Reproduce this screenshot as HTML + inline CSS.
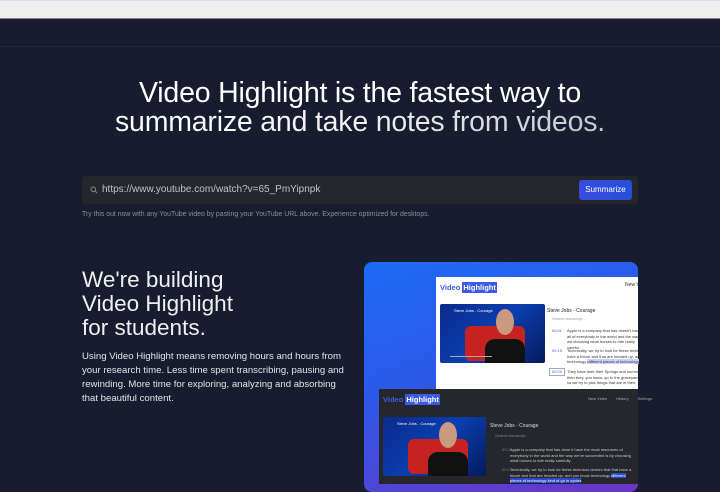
<!DOCTYPE html>
<html><head><style>
*{margin:0;padding:0;box-sizing:border-box}
body{width:720px;height:480px;overflow:hidden;background:#171c2e;font-family:"Liberation Sans",sans-serif;position:relative}
.top{position:absolute;left:0;top:0;width:720px;height:19px;background:#efefef;border-top:1px solid #d6def0;border-bottom:1px solid #888}
.line{position:absolute;left:0;top:46px;width:720px;height:1px;background:#232838}
h1{position:absolute;left:0;top:79px;width:720px;text-align:center;font-weight:normal;font-size:28.5px;line-height:29px;color:#fff;letter-spacing:-0.2px}
h1 span{background:linear-gradient(90deg,#fff 0%,#f2f2f4 50%,#c4c7d0 100%);-webkit-background-clip:text;color:transparent}
.inp{position:absolute;left:82px;top:176px;width:556px;height:28px;background:#25262c;border-radius:4px}
.inp .t{position:absolute;left:20px;top:8px;font-size:10px;color:#c2c3c8}
.inp svg{position:absolute;left:8px;top:10px}
.btn{position:absolute;right:6px;top:4px;width:53px;height:20px;background:linear-gradient(90deg,#3a4be0,#2450d8);border-radius:3px;color:#fff;font-size:8px;text-align:center;line-height:20px}
.hint{position:absolute;left:82px;top:211px;font-size:6.9px;color:#8b8e9a}
h2{position:absolute;left:82px;top:268px;font-weight:normal;font-size:22.5px;line-height:24px;color:#f0f0f2}
p{position:absolute;left:82px;top:350px;width:272px;font-size:9.6px;line-height:14px;color:#e4e5ea}
.card{position:absolute;left:364px;top:262px;width:274px;height:230px;border-radius:8px;background:linear-gradient(160deg,#1d6bf5 0%,#2b5ae8 40%,#5a3fcf 80%,#6c35c5 100%)}
.w{position:absolute;left:436px;top:277px;width:202px;height:125px;background:#fff}
.d{position:absolute;left:379px;top:389px;width:259px;height:95px;background:#25272c}
.logo{position:absolute;font-size:7.5px;font-weight:bold;color:#3b5be0;white-space:nowrap}
.logo b{background:#3b5be0;color:#fff;padding:1px 1px}
.vid{position:absolute;background:linear-gradient(135deg,#0b2a8c,#0a3fb0 50%,#051a5c);border-radius:2px;overflow:hidden}
.vid .chair{position:absolute;background:#c62222;border-radius:6px}
.vid .face{position:absolute;background:#c99a80;border-radius:50%}
.vid .body{position:absolute;background:#111;border-radius:10px 10px 0 0}
.tx{position:absolute;font-size:4px;line-height:5.5px}
.sm{position:absolute;font-size:5px;white-space:nowrap}
</style></head><body>
<div class="top"></div>
<div class="line"></div>
<h1>Video Highlight is the fastest way to<br><span>summarize and take notes from videos.</span></h1>
<div class="inp"><svg width="8" height="8" viewBox="0 0 8 8"><circle cx="3.3" cy="3.3" r="2.3" fill="none" stroke="#888" stroke-width="1"/><path d="M5 5l2 2" stroke="#888" stroke-width="1"/></svg><div class="t">https://www.youtube.com/watch?v=65_PmYipnpk</div><div class="btn">Summarize</div></div>
<div class="hint">Try this out now with any YouTube video by pasting your YouTube URL above. Experience optimized for desktops.</div>
<h2>We're building<br>Video Highlight<br>for students.</h2>
<p>Using Video Highlight means removing hours and hours from your research time. Less time spent transcribing, pausing and rewinding. More time for exploring, analyzing and absorbing that beautiful content.</p>
<div class="card"></div>
<div class="w">
<div class="logo" style="left:4px;top:6px">Video <b>Highlight</b></div>
<div class="sm" style="left:189px;top:5px;color:#333">New V</div>
<div class="vid" style="left:4px;top:27px;width:105px;height:59px"><div class="chair" style="left:25px;top:22px;width:60px;height:35px"></div><div class="body" style="left:45px;top:35px;width:40px;height:24px"></div><div class="face" style="left:56px;top:5px;width:18px;height:26px"></div><div class="sm" style="left:14px;top:4px;color:#fff;font-size:4px">Steve Jobs - Courage</div><div style="position:absolute;left:10px;top:52px;width:42px;height:1px;background:#aaa"></div></div>
<div class="sm" style="left:111px;top:31px;color:#222">Steve Jobs - Courage</div>
<div class="tx" style="left:116px;top:39px;color:#999">Search transcript...</div>
<div class="tx" style="left:131px;top:51px;width:75px;color:#333">Apple is a company that has doesn't have all of everybody in the world and the way we choosing what horses to ride really careful</div>
<div class="tx" style="left:131px;top:71px;width:75px;color:#333">Technically, we try to look for these techn have a future and that are headed up, an technology <span style="background:#c8d4ff">different pieces of technology</span></div>
<div class="tx" style="left:131px;top:92px;width:75px;color:#333">They have their their Springs and summer then they, you know, go to the graveyard so we try to pick things that are in their</div>
<div class="tx" style="left:116px;top:51px;color:#3b5be0">00:01</div><div class="tx" style="left:116px;top:71px;color:#3b5be0">00:15</div><div class="tx" style="left:113px;top:91px;color:#3b5be0;border:1px solid #9ab;padding:0 2px">00:29</div>
</div>
<div class="d">
<div class="logo" style="left:4px;top:6px;color:#3b5be0">Video <b>Highlight</b></div>
<div class="sm" style="left:209px;top:7px;color:#aaa;font-size:4px">New Video &nbsp;&nbsp;&nbsp;&nbsp;&nbsp;&nbsp; History &nbsp;&nbsp;&nbsp;&nbsp;&nbsp;&nbsp; Settings</div>
<div class="vid" style="left:4px;top:28px;width:103px;height:59px"><div class="chair" style="left:25px;top:22px;width:60px;height:35px"></div><div class="body" style="left:45px;top:35px;width:40px;height:24px"></div><div class="face" style="left:56px;top:5px;width:18px;height:26px"></div><div class="sm" style="left:14px;top:4px;color:#fff;font-size:4px">Steve Jobs - Courage</div></div>
<div class="sm" style="left:111px;top:34px;color:#ddd">Steve Jobs - Courage</div>
<div class="tx" style="left:116px;top:44px;color:#888">Search transcript...</div>
<div class="tx" style="left:131px;top:58px;width:125px;color:#ccc">Apple is a company that has done it have the most resources of everybody in the world and the way we've succeeded is by choosing what horses to ride really carefully.</div>
<div class="tx" style="left:131px;top:78px;width:125px;color:#ccc">Technically, we try to look for these technical vectors that that have a future and that are headed up, and you know technology <span style="background:#2a49c4;color:#fff">different pieces of technology kind of go in cycles</span></div>
<div class="tx" style="left:123px;top:58px;color:#777">00:01</div><div class="tx" style="left:123px;top:78px;color:#777">00:15</div>
</div>
</body></html>
